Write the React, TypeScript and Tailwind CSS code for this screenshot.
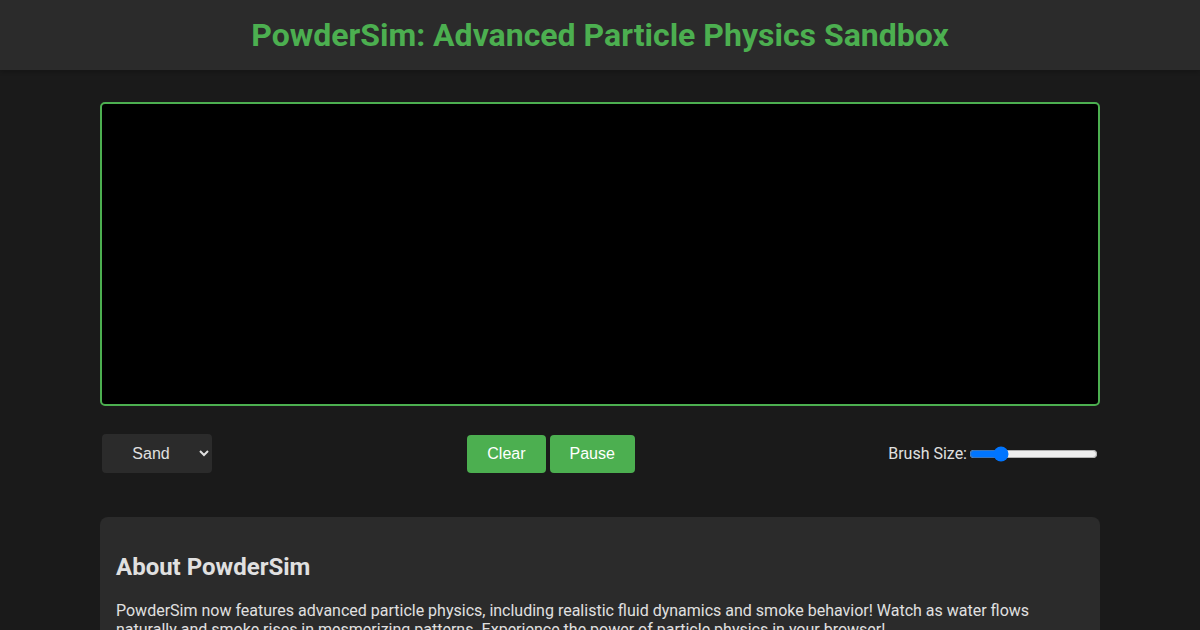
import React from "react";

export default function App() {
  return (
    <div className="min-h-[630px] bg-[#1a1a1a] text-[#e0e0e0] font-['Roboto',sans-serif]">
      <header className="bg-[#2b2b2b] p-4 text-center shadow-[0_2px_4px_rgba(0,0,0,0.2)]">
        <h1 className="text-[32px] font-bold leading-[normal] text-[#4caf50]">
          PowderSim: Advanced Particle Physics Sandbox
        </h1>
      </header>

      <main className="mx-auto mt-8 w-[1000px]">
        <div className="h-[304px] rounded-[5px] border-2 border-[#4caf50] bg-black" />

        <div className="mt-[28px] flex items-center justify-between">
          <select
            defaultValue="sand"
            className="mx-[2px] h-[39px] w-[110px] rounded-[4px] bg-[#2b2b2b] px-[10px] text-[16px] leading-[normal] text-[#e0e0e0] font-['Liberation_Sans',Arial,sans-serif] [text-align-last:center] outline-none"
          >
            <option value="sand">Sand</option>
            <option value="water">Water</option>
            <option value="smoke">Smoke</option>
            <option value="wall">Wall</option>
          </select>

          <div className="flex gap-1">
            <button className="h-[38px] rounded-[4px] bg-[#4caf50] px-5 text-[16px] leading-[normal] text-white font-['Liberation_Sans',Arial,sans-serif]">
              Clear
            </button>
            <button className="h-[38px] rounded-[4px] bg-[#4caf50] px-5 text-[16px] leading-[normal] text-white font-['Liberation_Sans',Arial,sans-serif]">
              Pause
            </button>
          </div>

          <div className="flex items-center">
            <label className="text-[16px] leading-[normal]">Brush Size:</label>
            <input
              type="range"
              min={1}
              max={20}
              defaultValue={5}
              className="mx-[2px] w-[129px]"
            />
          </div>
        </div>

        <section className="mt-[44px] rounded-[8px] bg-[#2b2b2b] px-4 pt-4 pb-5">
          <h2 className="my-[20px] text-[24px] font-bold leading-[normal]">
            About PowderSim
          </h2>
          <p className="text-[16px] leading-[normal]">
            PowderSim now features advanced particle physics, including realistic fluid dynamics and smoke behavior! Watch as water flows naturally and smoke rises in mesmerizing patterns. Experience the power of particle physics in your browser!
          </p>
        </section>
      </main>
    </div>
  );
}
